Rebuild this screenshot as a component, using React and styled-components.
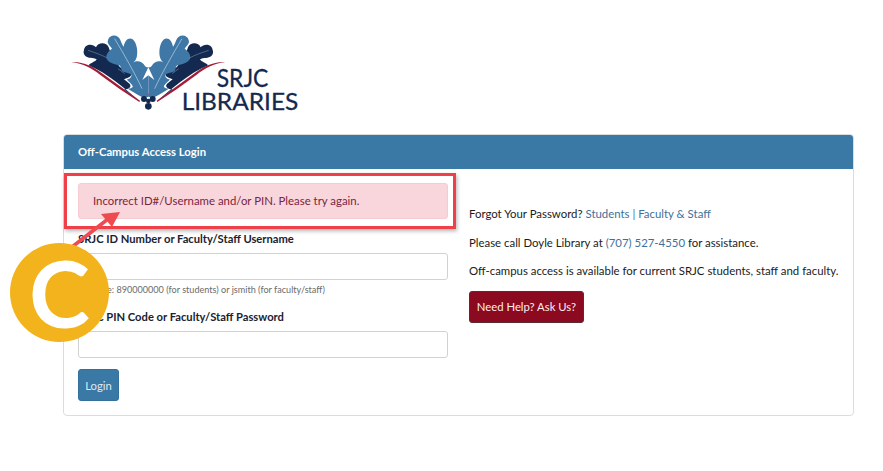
import React from 'react';
import styled, { createGlobalStyle } from 'styled-components';

const Global = createGlobalStyle`
  html, body {
    margin: 0;
    background: #fff;
    font-family: Lato, "Open Sans", sans-serif;
    color: #1b1b1b;
  }
`;

const Page = styled.div`
  position: relative;
  width: 883px;
  height: 471px;
  overflow: hidden;
  padding: 30px 29px 0 63px;
  box-sizing: border-box;
`;

const LogoWrap = styled.div`
  height: 90px;
  margin: 0 0 14px -3px;
`;

const Panel = styled.section`
  width: 791px;
  height: 282px;
  box-sizing: border-box;
  border: 1px solid #dcdcdc;
  border-radius: 4px;
  overflow: hidden;
`;

const PanelHead = styled.h1`
  margin: -1px -1px 0;
  height: 35px;
  padding-left: 15px;
  background: #3a78a5;
  color: #fff;
  font-size: 11.3px;
  font-weight: 700;
  line-height: 35px;
`;

const PanelBody = styled.div`
  display: flex;
  gap: 21px;
  padding: 14px 14px 0;
`;

const LeftCol = styled.form`
  flex: none;
  width: 370px;
  display: flex;
  flex-direction: column;
`;

const RightCol = styled.div`
  flex: 1;
  display: flex;
  flex-direction: column;
  align-items: flex-start;
  padding-top: 23px;
`;

const Alert = styled.div`
  height: 36px;
  box-sizing: border-box;
  padding-left: 14px;
  background: #f9d6db;
  border: 1px solid #f6cbd1;
  border-radius: 3px;
  color: #7a2440;
  font-size: 11.4px;
  line-height: 34px;
  margin-bottom: 12px;
`;

const Label = styled.label`
  font-size: 11.2px;
  font-weight: 700;
  line-height: 15px;
  color: #1a2230;
  margin-bottom: ${p => p.$gap}px;
`;

const Input = styled.input`
  height: 27px;
  box-sizing: border-box;
  border: 1px solid #d2d2d2;
  border-radius: 3px;
  background: #fff;
`;

const Help = styled.small`
  font-size: 9.1px;
  line-height: 12px;
  color: #6b6b6b;
  margin: 4px 0 13px;
`;

const LoginButton = styled.button`
  width: 41px;
  height: 32px;
  margin-top: 11px;
  padding: 0;
  border: 1px solid #34709c;
  border-radius: 3px;
  background: #3a78a5;
  color: #dfe9f1;
  font: 400 11.3px Lato, sans-serif;
`;

const Line = styled.p`
  margin: 0 0 13.5px;
  font-size: 11.4px;
  line-height: 15px;
  color: #1b1b1b;
  white-space: nowrap;
`;

const Link = styled.a`
  color: #3f7198;
  text-decoration: none;
`;

const HelpButton = styled.button`
  width: 115px;
  height: 32px;
  margin-top: -1px;
  padding: 0;
  border: 1px solid #5c2a36;
  border-radius: 3px;
  background: #8c0a20;
  color: #fbeef0;
  font: 400 11.3px Lato, sans-serif;
`;

const Highlight = styled.div`
  position: absolute;
  left: 64px;
  top: 173px;
  width: 392px;
  height: 56px;
  box-sizing: border-box;
  border: 3px solid #ef4049;
  box-shadow: 1px 2px 4px rgba(0, 0, 0, 0.3);
`;

const ArrowSvg = styled.svg`
  position: absolute;
  left: 60px;
  top: 205px;
`;

const Badge = styled.div`
  position: absolute;
  left: 10px;
  top: 243px;
  width: 99px;
  height: 99px;
  border-radius: 50%;
  background: #f2b31d;
  color: #fff;
  display: flex;
  align-items: center;
  justify-content: center;
  font-size: 92px;
  font-weight: 700;
  line-height: 1;
`;

const LOGO_NAVY = '#13294f';
const LOGO_BLUE = '#3f78a6';

const HalfLogo = () => (
  <>
    <path d="M34 96C70 94 100 110 124 128L184 172L240 212L238 216L180 178L120 134C95 115 70 100 34 96Z" fill="#a31d37" />
    <path
      d="M72 60C74 42 98 40 108 52C114 36 140 36 146 52L156 80L180 112C194 118 214 124 214 134C210 144 198 144 192 148C198 154 214 162 211 170C206 178 198 178 192 178L236 211C194 176 144 131 86 106C92 98 106 96 110 88C100 82 84 86 76 78C70 72 70 66 72 60Z"
      fill={LOGO_NAVY}
    />
    <path
      d="M144 30C148 14 174 10 182 32C186 42 188 46 191 50C194 32 206 20 218 28C232 40 234 68 230 82C228 90 224 94 220 98C230 90 248 94 255 108C258 112 262 112 265 112L247 150L265 136L265 201L246 201C230 192 215 184 204 176C212 176 220 172 218 168C212 158 202 154 201 148C206 148 216 142 214 134C206 128 192 128 186 123C182 116 184 110 178 106C165 102 146 100 140 86C136 72 148 62 156 56C150 46 140 42 144 30Z"
      fill={LOGO_BLUE}
    />
    <path d="M164 26C190 70 225 130 246 176" stroke="#c3d6e6" strokeWidth="2" fill="none" />
    <path d="M84 61C105 68 125 75 142 84" stroke="#8fa3bb" strokeWidth="1.5" fill="none" />
    <path d="M174 116L194 131" stroke="#8fa3bb" strokeWidth="1.5" fill="none" />
  </>
);

const Logo = () => (
  <svg width="250" height="90" viewBox="0 0 750 270">
    <HalfLogo />
    <g transform="translate(530 0) scale(-1 1)">
      <HalfLogo />
    </g>
    <circle cx="252" cy="207" r="9" fill={LOGO_NAVY} />
    <circle cx="278" cy="207" r="9" fill={LOGO_NAVY} />
    <circle cx="265" cy="213" r="7" fill={LOGO_NAVY} />
    <circle cx="265" cy="229" r="10" fill={LOGO_NAVY} />
    <circle cx="265" cy="194" r="3" fill="#7d5a86" />
    <text x="470" y="170" fontFamily="Lato, sans-serif" fontSize="76" fill={LOGO_NAVY} stroke={LOGO_NAVY} strokeWidth="0.8" textLength="155" lengthAdjust="spacingAndGlyphs">
      SRJC
    </text>
    <text x="365" y="240" fontFamily="Lato, sans-serif" fontSize="70" fill={LOGO_NAVY} stroke={LOGO_NAVY} strokeWidth="0.8" textLength="350" lengthAdjust="spacingAndGlyphs">
      LIBRARIES
    </text>
  </svg>
);

const App = () => (
  <Page>
    <Global />
    <LogoWrap>
      <Logo />
    </LogoWrap>
    <Panel>
      <PanelHead>Off-Campus Access Login</PanelHead>
      <PanelBody>
        <LeftCol>
          <Alert>Incorrect ID#/Username and/or PIN. Please try again.</Alert>
          <Label $gap={7}>SRJC ID Number or Faculty/Staff Username</Label>
          <Input />
          <Help>Example: 890000000 (for students) or jsmith (for faculty/staff)</Help>
          <Label $gap={7}>SRJC PIN Code or Faculty/Staff Password</Label>
          <Input />
          <LoginButton type="button">Login</LoginButton>
        </LeftCol>
        <RightCol>
          <Line>
            Forgot Your Password? <Link>Students</Link> <Link>|</Link> <Link>Faculty &amp; Staff</Link>
          </Line>
          <Line>
            Please call Doyle Library at <Link>(707) 527-4550</Link> for assistance.
          </Line>
          <Line>Off-campus access is available for current SRJC students, staff and faculty.</Line>
          <HelpButton type="button">Need Help? Ask Us?</HelpButton>
        </RightCol>
      </PanelBody>
    </Panel>
    <Highlight />
    <ArrowSvg width="70" height="50" viewBox="0 0 70 50">
      <path d="M12 42L48 14" stroke="#ef4a50" strokeWidth="3.5" fill="none" />
      <path d="M60 7L52 22L41 9Z" fill="#ef4a50" />
    </ArrowSvg>
    <Badge>C</Badge>
  </Page>
);

export default App;
